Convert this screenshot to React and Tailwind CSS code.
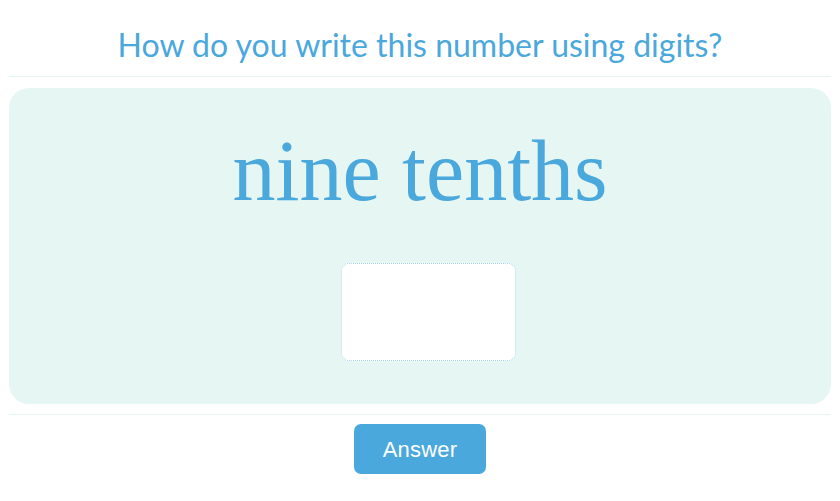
export default function App() {
  return (
    <div className="w-[840px] h-[501px] bg-white flex flex-col items-stretch px-[9px] font-['Lato',sans-serif]">
      <div className="h-[77px] flex items-center justify-center border-b border-[#e6f6f3] pt-[14px]">
        <h1 className="text-[32px] text-[#4aa8dc] leading-none">How do you write this number using digits?</h1>
      </div>
      <div className="mt-[11px] h-[316px] rounded-[20px] bg-[#e6f6f3] flex flex-col items-center">
        <div className="mt-[40px] text-[86px] leading-none text-[#4aa8dc] font-['Liberation_Serif',serif]">nine tenths</div>
        <input
          type="text"
          className="mt-[49px] ml-[16px] w-[175px] h-[98px] rounded-[8px] bg-white border border-dotted border-[#a9d6ea] outline-none"
        />
      </div>
      <div className="mt-[10px] border-t border-[#e6f6f3] flex justify-center pt-[9px]">
        <button className="w-[132px] h-[50px] rounded-[7px] bg-[#4aa8dc] text-white text-[22px] tracking-[0.2px] font-['Liberation_Sans',sans-serif]">
          Answer
        </button>
      </div>
    </div>
  );
}
